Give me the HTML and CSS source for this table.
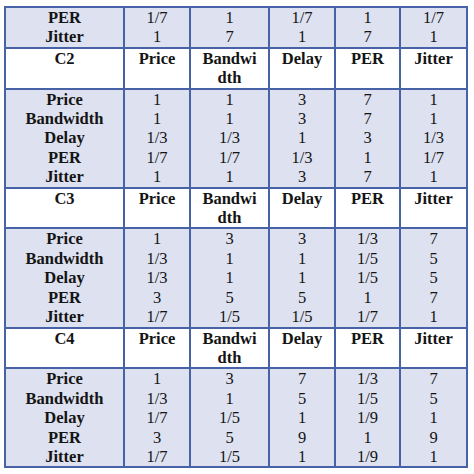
FILE: index.html
```html
<!DOCTYPE html>
<html>
<head>
<meta charset="utf-8">
<link rel="stylesheet" href="styles.css">
</head>
<body class="page">
<table class="ahp">
  <tr class="data">
    <th class="w-label">PER<br>Jitter</th>
    <td class="w-a">1/7<br>1</td>
    <td class="w-b">1<br>7</td>
    <td class="w-a">1/7<br>1</td>
    <td class="w-d">1<br>7</td>
    <td class="w-e">1/7<br>1</td>
  </tr>
  <tr class="head">
    <th>C2</th><th>Price</th><th>Bandwi<br>dth</th><th>Delay</th><th>PER</th><th>Jitter</th>
  </tr>
  <tr class="data">
    <th>Price<br>Bandwidth<br>Delay<br>PER<br>Jitter</th>
    <td>1<br>1<br>1/3<br>1/7<br>1</td>
    <td>1<br>1<br>1/3<br>1/7<br>1</td>
    <td>3<br>3<br>1<br>1/3<br>3</td>
    <td>7<br>7<br>3<br>1<br>7</td>
    <td>1<br>1<br>1/3<br>1/7<br>1</td>
  </tr>
  <tr class="head">
    <th>C3</th><th>Price</th><th>Bandwi<br>dth</th><th>Delay</th><th>PER</th><th>Jitter</th>
  </tr>
  <tr class="data">
    <th>Price<br>Bandwidth<br>Delay<br>PER<br>Jitter</th>
    <td>1<br>1/3<br>1/3<br>3<br>1/7</td>
    <td>3<br>1<br>1<br>5<br>1/5</td>
    <td>3<br>1<br>1<br>5<br>1/5</td>
    <td>1/3<br>1/5<br>1/5<br>1<br>1/7</td>
    <td>7<br>5<br>5<br>7<br>1</td>
  </tr>
  <tr class="head">
    <th>C4</th><th>Price</th><th>Bandwi<br>dth</th><th>Delay</th><th>PER</th><th>Jitter</th>
  </tr>
  <tr class="data">
    <th>Price<br>Bandwidth<br>Delay<br>PER<br>Jitter</th>
    <td>1<br>1/3<br>1/7<br>3<br>1/7</td>
    <td>3<br>1<br>1/5<br>5<br>1/5</td>
    <td>7<br>5<br>1<br>9<br>1</td>
    <td>1/3<br>1/5<br>1/9<br>1<br>1/9</td>
    <td>7<br>5<br>1<br>9<br>1</td>
  </tr>
</table>
</body>
</html>
```

FILE: styles.css
```css
.page {
  margin: 0;
  padding: 6px 0 0 4px;
  background: #ffffff;
  font-family: "Liberation Serif", serif;
}

.ahp {
  border-collapse: collapse;
  table-layout: fixed;
  width: 464px;
  font-family: "Liberation Serif", serif;
  font-size: 16.5px;
  line-height: 19.4px;
  color: #141414;
}

.w-label { width: 117px; }
.w-a { width: 64px; }
.w-b { width: 77px; }
.w-d { width: 63px; }
.w-e { width: 65px; }

.ahp th,
.ahp td {
  font-family: "Liberation Serif", serif;
  border: 2px solid #4862a8;
  padding: 0;
  text-align: center;
  vertical-align: top;
}

.ahp th {
  font-weight: bold;
}

.ahp td {
  font-weight: normal;
}

.data th,
.data td {
  background: #dde1f0;
}

.head th {
  background: #ffffff;
  height: 38.8px;
}
```
